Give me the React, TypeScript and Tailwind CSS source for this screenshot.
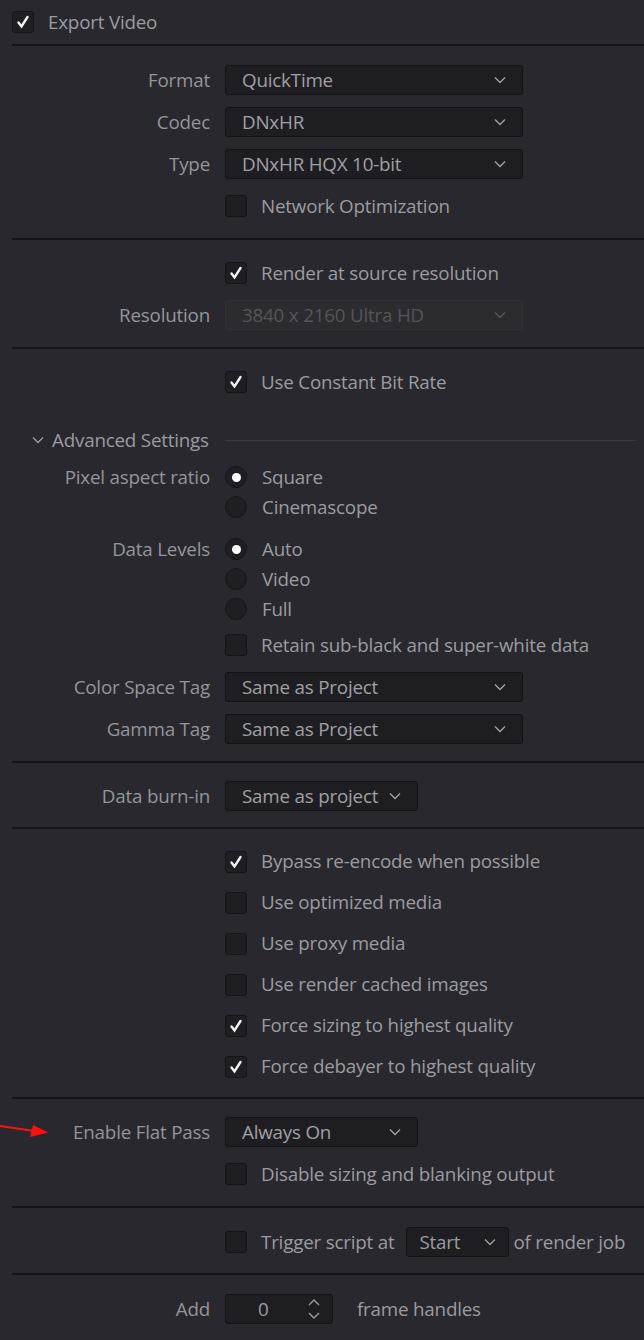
import { ReactNode } from 'react'

const Chevron = ({ className = '' }: { className?: string }) => (
  <svg width="12" height="8" viewBox="0 0 12 8" className={className} fill="none" stroke="currentColor" strokeWidth="1.4">
    <path d="M1 1.5l5 5 5-5" />
  </svg>
)

const Check = () => (
  <svg width="16" height="16" viewBox="0 0 16 16" fill="none" stroke="#f2f2f2" strokeWidth="2.4" strokeLinecap="round">
    <path d="M3.5 8.5l3 4L12.5 3" />
  </svg>
)

function Box({ checked }: { checked?: boolean }) {
  return (
    <span className="flex h-[22px] w-[22px] shrink-0 items-center justify-center rounded-[3px] border border-[#16161a] bg-[#1f1f23]">
      {checked && <Check />}
    </span>
  )
}

function Radio({ on }: { on?: boolean }) {
  return (
    <span className="flex h-[22px] w-[22px] shrink-0 items-center justify-center rounded-full border border-[#16161a] bg-[#1f1f23]">
      {on && <span className="h-[9px] w-[9px] rounded-full bg-white" />}
    </span>
  )
}

function Select({ value, w = 'w-[298px]', disabled }: { value: string; w?: string; disabled?: boolean }) {
  return (
    <div
      className={`flex h-[30px] ${w} items-center justify-between rounded-[3px] border pr-4 pl-4 ${
        disabled ? 'border-[#303036] bg-[#2b2b30] text-[#55555a]' : 'border-[#131316] bg-[#1e1e22] text-[#a0a0a4]'
      }`}
    >
      <span>{value}</span>
      <Chevron />
    </div>
  )
}

function Row({ label, children, h = 'h-[42px]', mt = '' }: { label?: string; children: ReactNode; h?: string; mt?: string }) {
  return (
    <div className={`flex ${h} ${mt} items-center`}>
      <div className="w-[210px] shrink-0 text-right text-[#95959a]">{label}</div>
      <div className="ml-[15px] flex items-center gap-4">{children}</div>
    </div>
  )
}

const Sep = ({ mt }: { mt: string }) => <div className={`ml-3 h-[2px] bg-[#151518] ${mt}`} />

const CheckRow = ({ label, checked, h, mt }: { label: string; checked?: boolean; h?: string; mt?: string }) => (
  <Row h={h} mt={mt}>
    <Box checked={checked} />
    <span className="-ml-[2px]">{label}</span>
  </Row>
)

const RadioRow = ({ label, text, on, mt }: { label?: string; text: string; on?: boolean; mt?: string }) => (
  <Row label={label} h="h-[30px]" mt={mt}>
    <Radio on={on} />
    <span className="-ml-[1px]">{text}</span>
  </Row>
)

export default function App() {
  return (
    <div className="h-[1340px] w-[644px] overflow-hidden bg-[#28282e] text-[18.8px] leading-none tracking-[-0.2px] text-[#9c9ca0]" style={{ fontFamily: '"Open Sans", "Noto Sans", sans-serif' }}>
      <div className="flex h-[44px] items-center gap-[14px] pl-3">
        <Box checked />
        <span>Export Video</span>
      </div>
      <Sep mt="" />

      <Row label="Format" mt="mt-[13px]"><Select value="QuickTime" /></Row>
      <Row label="Codec"><Select value="DNxHR" /></Row>
      <Row label="Type"><Select value="DNxHR HQX 10-bit" /></Row>
      <CheckRow label="Network Optimization" />
      <Sep mt="mt-[11px]" />

      <CheckRow label="Render at source resolution" checked mt="mt-[12px]" />
      <Row label="Resolution"><Select value="3840 x 2160 Ultra HD" disabled /></Row>
      <Sep mt="mt-[11px]" />

      <CheckRow label="Use Constant Bit Rate" checked mt="mt-[12px]" />

      <div className="mt-[22px] flex h-[30px] items-center pl-[32px]">
        <Chevron className="text-[#9a9a9e]" />
        <span className="ml-[8px]">Advanced Settings</span>
        <div className="ml-[16px] mr-2 h-px flex-1 bg-[#3a3a40]" />
      </div>

      <RadioRow label="Pixel aspect ratio" text="Square" on mt="mt-[7px]" />
      <RadioRow text="Cinemascope" />
      <RadioRow label="Data Levels" text="Auto" on mt="mt-[12px]" />
      <RadioRow text="Video" />
      <RadioRow text="Full" />
      <CheckRow label="Retain sub-black and super-white data" h="h-[30px]" mt="mt-[6px]" />
      <Row label="Color Space Tag" mt="mt-[6px]"><Select value="Same as Project" /></Row>
      <Row label="Gamma Tag"><Select value="Same as Project" /></Row>
      <Sep mt="mt-[11px]" />

      <Row label="Data burn-in" mt="mt-[12px]"><Select value="Same as project" w="w-[193px]" /></Row>
      <Sep mt="mt-[10px]" />

      <CheckRow label="Bypass re-encode when possible" checked h="h-[41px]" mt="mt-[12px]" />
      <CheckRow label="Use optimized media" h="h-[41px]" />
      <CheckRow label="Use proxy media" h="h-[41px]" />
      <CheckRow label="Use render cached images" h="h-[41px]" />
      <CheckRow label="Force sizing to highest quality" checked h="h-[41px]" />
      <CheckRow label="Force debayer to highest quality" checked h="h-[41px]" />
      <Sep mt="mt-[10px]" />

      <div className="relative">
        <svg className="absolute top-[11px] left-0" width="50" height="16" viewBox="0 0 50 16">
          <path d="M0 4l34 5" stroke="#ff1010" strokeWidth="2" />
          <path d="M48 10.5L30 15l3-12z" fill="#ff1010" />
        </svg>
        <Row label="Enable Flat Pass" mt="mt-[12px]"><Select value="Always On" w="w-[193px]" /></Row>
      </div>
      <CheckRow label="Disable sizing and blanking output" />
      <Sep mt="mt-[11px]" />

      <Row mt="mt-[13px]">
        <Box />
        <span className="-ml-[2px]">Trigger script at</span>
        <div className="-ml-[4px] flex h-[30px] w-[103px] items-center justify-between rounded-[3px] border border-[#131316] bg-[#1e1e22] px-3">
          <span>Start</span>
          <Chevron />
        </div>
        <span className="-ml-[12px]">of render job</span>
      </Row>
      <Sep mt="mt-[10px]" />

      <Row label="Add" mt="mt-[13px]">
        <div className="flex h-[30px] w-[108px] items-center justify-between rounded-[3px] border border-[#131316] bg-[#1e1e22] pr-3 pl-[32px]">
          <span>0</span>
          <svg width="12" height="22" viewBox="0 0 12 22" fill="none" stroke="currentColor" strokeWidth="1.4">
            <path d="M1 7l5-5 5 5M1 15l5 5 5-5" />
          </svg>
        </div>
        <span className="ml-2">frame handles</span>
      </Row>
    </div>
  )
}
